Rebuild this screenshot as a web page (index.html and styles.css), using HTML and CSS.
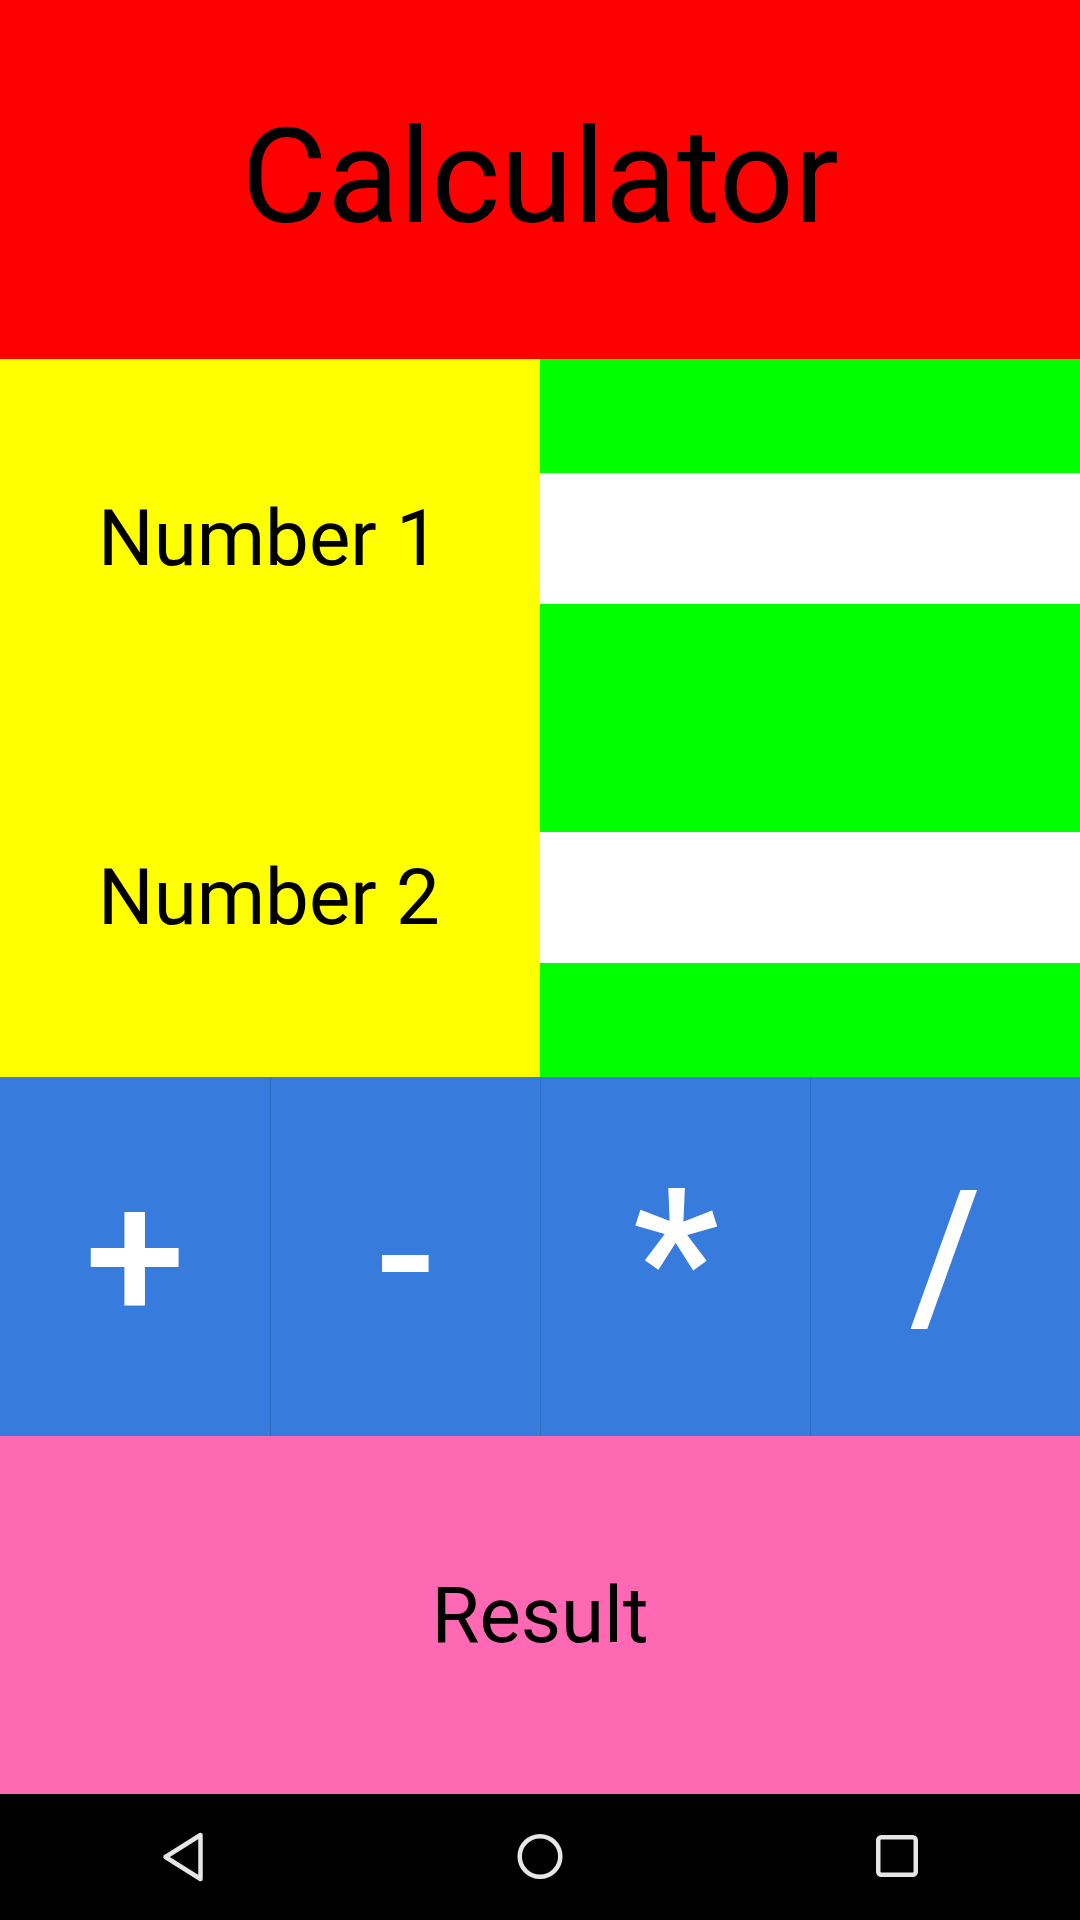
FILE: index.html
```html
<!DOCTYPE html>
<html>
<head>
<meta charset="utf-8">
<link rel="stylesheet" href="styles.css">
</head>
<body>
<div class="app">
  <header class="title-bar"><h1 class="title">Calculator</h1></header>
  <section class="inputs">
    <div class="labels">
      <div class="label">Number 1</div>
      <div class="label">Number 2</div>
    </div>
    <div class="fields">
      <div class="field-row"><div class="field"></div></div>
      <div class="field-row"><div class="field"></div></div>
    </div>
  </section>
  <section class="ops">
    <div class="op">+</div>
    <div class="op">-</div>
    <div class="op"><span class="star">*</span></div>
    <div class="op">/</div>
  </section>
  <section class="result"><div class="result-text">Result</div></section>
  <nav class="navbar">
    <svg class="nav-icon" width="60" height="60" viewBox="0 0 60 60">
      <path d="M47.5 8 L47.5 52 L12.5 30 Z" fill="none" stroke="#e6e6e6" stroke-width="4.5" stroke-linejoin="round"/>
    </svg>
    <svg class="nav-icon" width="60" height="60" viewBox="0 0 60 60">
      <circle cx="30" cy="29.5" r="20.3" fill="none" stroke="#e6e6e6" stroke-width="4.5"/>
    </svg>
    <svg class="nav-icon" width="60" height="60" viewBox="0 0 60 60">
      <rect x="11.25" y="10.25" width="37.5" height="37.5" rx="3" fill="none" stroke="#e6e6e6" stroke-width="4.5"/>
    </svg>
  </nav>
</div>
</body>
</html>
```
FILE: styles.css
```css
html, body {
  margin: 0;
  padding: 0;
}
body {
  width: 1080px;
  height: 1920px;
  overflow: hidden;
  font-family: Roboto, "Noto Sans", sans-serif;
}
.app {
  display: flex;
  flex-direction: column;
  width: 1080px;
  height: 1920px;
}
.title-bar {
  height: 359px;
  background: #ff0000;
  display: flex;
  align-items: center;
  justify-content: center;
}
.title {
  margin: 0;
  font-weight: 400;
  font-size: 132px;
  color: #000;
  line-height: normal;
  transform: translateY(-3px);
}
.inputs {
  height: 718px;
  display: grid;
  grid-template-columns: 540px 540px;
}
.labels {
  background: #ffff00;
  display: grid;
  grid-template-rows: 359px 359px;
}
.label {
  display: flex;
  align-items: center;
  justify-content: center;
  font-size: 78px;
  color: #000;
  padding-right: 2px;
}
.fields {
  background: #00ff00;
  display: grid;
  grid-template-rows: 359px 359px;
}
.field-row {
  display: flex;
  align-items: center;
}
.field {
  width: 100%;
  height: 131px;
  background: #ffffff;
}
.ops {
  height: 359px;
  display: grid;
  grid-template-columns: repeat(4, 1fr);
  background: #377bdc;
}
.op {
  display: flex;
  align-items: center;
  justify-content: center;
  color: #ffffff;
  font-size: 180px;
  font-weight: 500;
  border-left: 1px solid #2f6cc4;
}
.op:first-child {
  border-left: none;
}
.star {
  display: inline-block;
  transform: translateY(4px) scale(1.08);
}
.result {
  height: 358px;
  background: #ff69b4;
  display: flex;
  align-items: center;
  justify-content: center;
}
.result-text {
  font-size: 78px;
  color: #000;
}
.navbar {
  height: 126px;
  background: #000;
  display: grid;
  grid-template-columns: 1fr 1fr 1fr;
  align-items: center;
  justify-items: center;
  padding: 0 5px;
}
.nav-icon {
  display: block;
}
```
